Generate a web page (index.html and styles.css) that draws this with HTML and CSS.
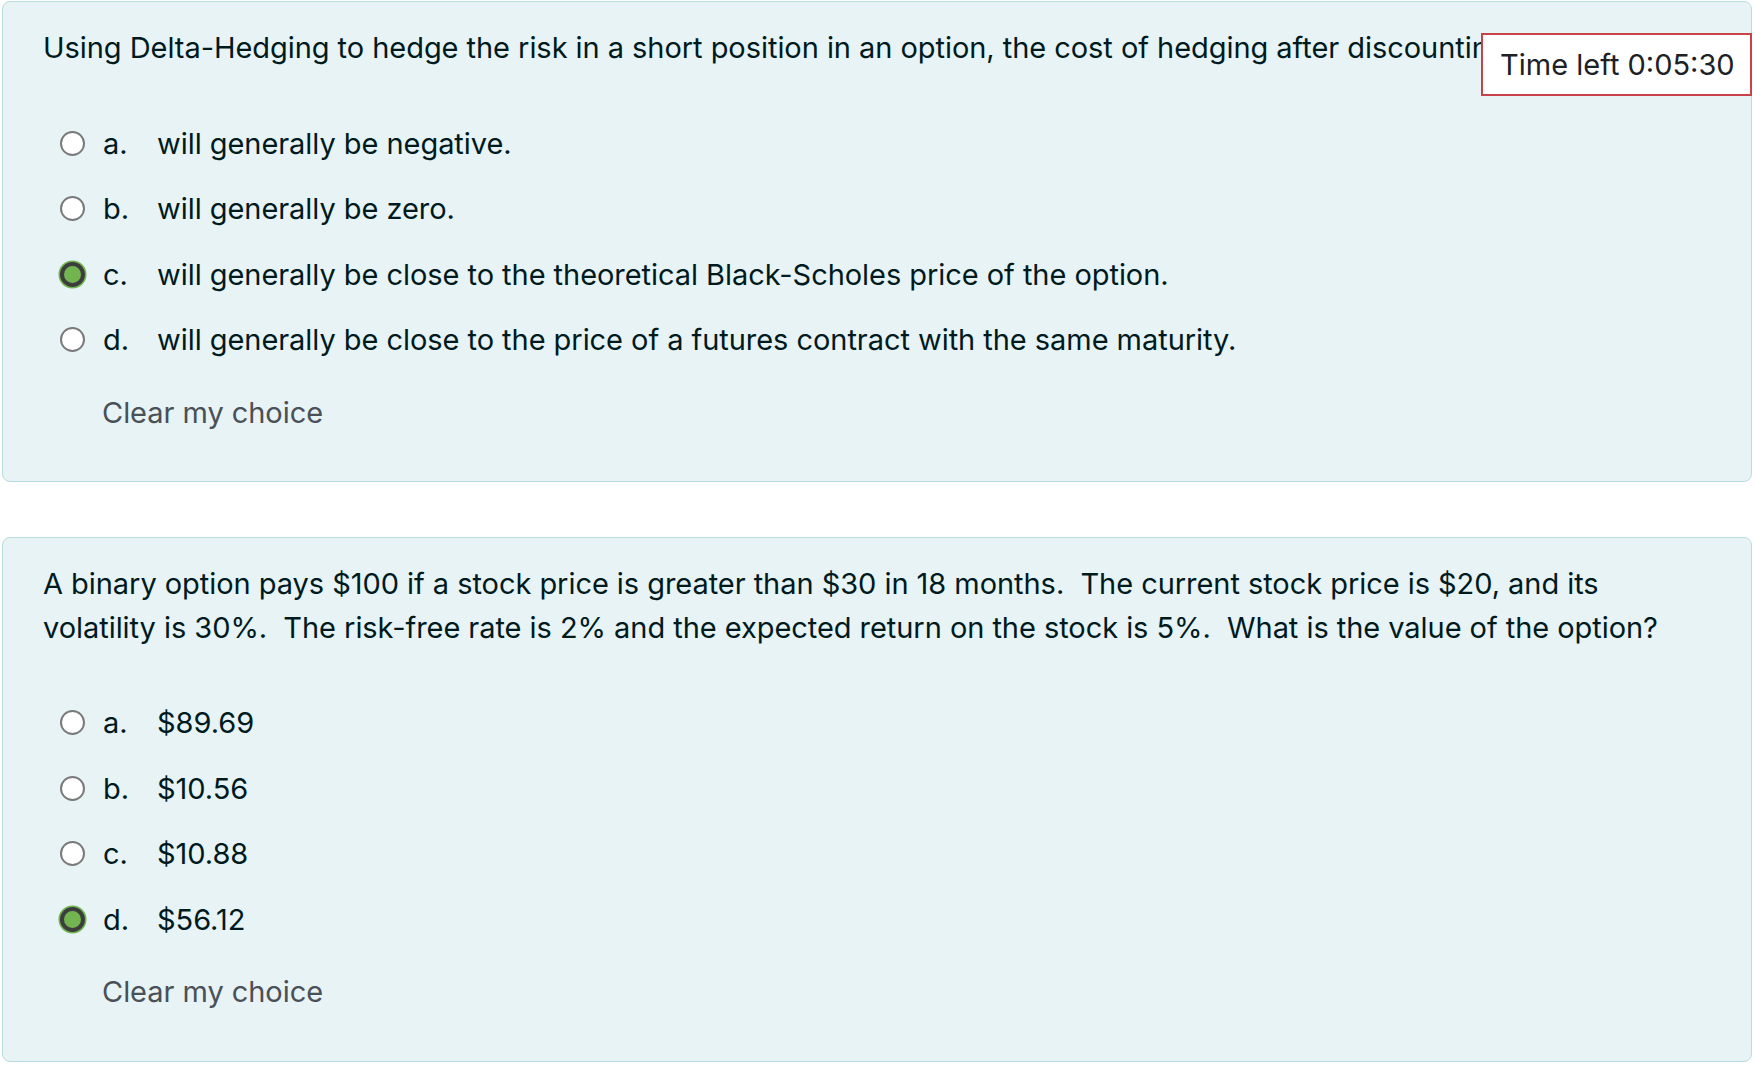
FILE: index.html
```html
<!DOCTYPE html>
<html lang="en">
<head>
  <meta charset="UTF-8">
  <title>Quiz</title>
  <meta name="viewport" content="width=device-width, initial-scale=1">
  <link rel="stylesheet" href="styles.css">
</head>
<body>
  <div class="page">
    <div class="que">
      <div class="qtext nowrap">Using Delta-Hedging to hedge the risk in a short position in an option, the cost of hedging after discounting is</div>
      <div class="answers">
        <label class="opt"><input type="radio" name="q1"><span class="num">a.</span><span>will generally be negative.</span></label>
        <label class="opt"><input type="radio" name="q1"><span class="num">b.</span><span>will generally be zero.</span></label>
        <label class="opt"><input type="radio" name="q1" checked><span class="num">c.</span><span>will generally be close to the theoretical Black-Scholes price of the option.</span></label>
        <label class="opt"><input type="radio" name="q1"><span class="num">d.</span><span>will generally be close to the price of a futures contract with the same maturity.</span></label>
      </div>
      <div class="clear">Clear my choice</div>
    </div>

    <div class="que">
      <div class="qtext">A binary option pays $100 if a stock price is greater than $30 in 18 months.&nbsp; The current stock price is $20, and its volatility is 30%.&nbsp; The risk-free rate is 2% and the expected return on the stock is 5%.&nbsp; What is the value of the option?</div>
      <div class="answers">
        <label class="opt"><input type="radio" name="q2"><span class="num">a.</span><span>$89.69</span></label>
        <label class="opt"><input type="radio" name="q2"><span class="num">b.</span><span>$10.56</span></label>
        <label class="opt"><input type="radio" name="q2"><span class="num">c.</span><span>$10.88</span></label>
        <label class="opt"><input type="radio" name="q2" checked><span class="num">d.</span><span>$56.12</span></label>
      </div>
      <div class="clear">Clear my choice</div>
    </div>
  </div>

  <div class="timer">Time left 0:05:30</div>
</body>
</html>
```

FILE: styles.css
```css
body { margin: 0; background: #fff; font-family: Inter, "Noto Sans", Arial, sans-serif; color: #001a1e; }
.page { padding: 1px 3px 0 2px; }

.que {
  background: #e7f3f5; border: 1px solid #b8dce2; border-radius: 8px;
  padding: 24px 40px 47px 40px; margin-bottom: 55px; overflow: hidden;
  font-size: 29px; line-height: 1.5; letter-spacing: -0.05px;
}
.qtext { margin-bottom: 41px; }
.nowrap { white-space: nowrap; }

.answers { display: flex; flex-direction: column; }
.opt { display: flex; align-items: center; padding: 11px 0; cursor: pointer; }
.opt .num { width: 54px; flex: none; }

.opt input {
  appearance: none; -webkit-appearance: none; margin: 0 18px 0 17px;
  width: 25px; height: 25px; border-radius: 50%; flex: none;
  border: 2px solid #7a7a7a; background: #fff;
}
.opt input:checked {
  border: 4px solid #3d3d3d; background: #72b550;
  box-shadow: 0 0 0 1.5px #72b550;
}

.clear { margin: 18px 0 0 59px; color: #495057; }

.timer {
  position: fixed; top: 33px; right: 3px; width: 271px; height: 63px;
  box-sizing: border-box; border: 2px solid #c9424a; background: #fff;
  padding-left: 17px; display: flex; align-items: center;
  font-size: 29px; color: #1d2125;
}
```
